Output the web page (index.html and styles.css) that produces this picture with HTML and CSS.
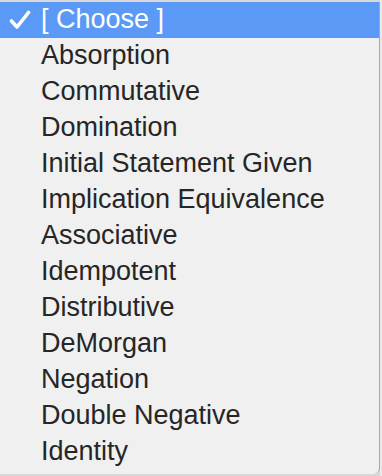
FILE: index.html
```html
<!DOCTYPE html>
<html lang="en">
<head>
    <meta charset="UTF-8">
    <title>Rule</title>
    <link rel="stylesheet" href="styles.css">
</head>
<body>
<div id="container">
    <ul id="menu">
        <li class="item selected">
            <svg class="check" width="22" height="20" viewBox="0 0 22 20">
                <polyline points="2.5,11 8,17 19.5,2.5" fill="none" stroke="#fff" stroke-width="3.6" stroke-linecap="round" stroke-linejoin="round"/>
            </svg>[ Choose ]</li>
        <li class="item">Absorption</li>
        <li class="item">Commutative</li>
        <li class="item">Domination</li>
        <li class="item">Initial Statement Given</li>
        <li class="item">Implication Equivalence</li>
        <li class="item">Associative</li>
        <li class="item">Idempotent</li>
        <li class="item">Distributive</li>
        <li class="item">DeMorgan</li>
        <li class="item">Negation</li>
        <li class="item">Double Negative</li>
        <li class="item">Identity</li>
    </ul>
    <div id="edge"></div>
</div>
</body>
</html>
```

FILE: styles.css
```css
body{
    margin: 0;
    background-color: #d8d8d8;
    font-family: "Liberation Sans", Arial, sans-serif;
}
#container{
    display: flex;
    width: 382px;
    height: 476px;
    overflow: hidden;
}
#menu{
    list-style: none;
    margin: 2px 0 0 0;
    padding: 0;
    width: 379px;
    height: 472px;
    background-color: #f0f0f0;
    border-right: 1px solid #a9a9a9;
    border-bottom-right-radius: 6px;
    flex-shrink: 0;
}
.item{
    height: 34px;
    line-height: 34px;
    padding: 0 0 2px 41px;
    font-size: 27px;
    color: #262626;
    position: relative;
}
.selected{
    background-color: #5b99f6;
    color: #fff;
}
.check{
    position: absolute;
    left: 9px;
    top: 8px;
}
#edge{
    flex: 1;
    background-color: #e9e9e9;
}
```
